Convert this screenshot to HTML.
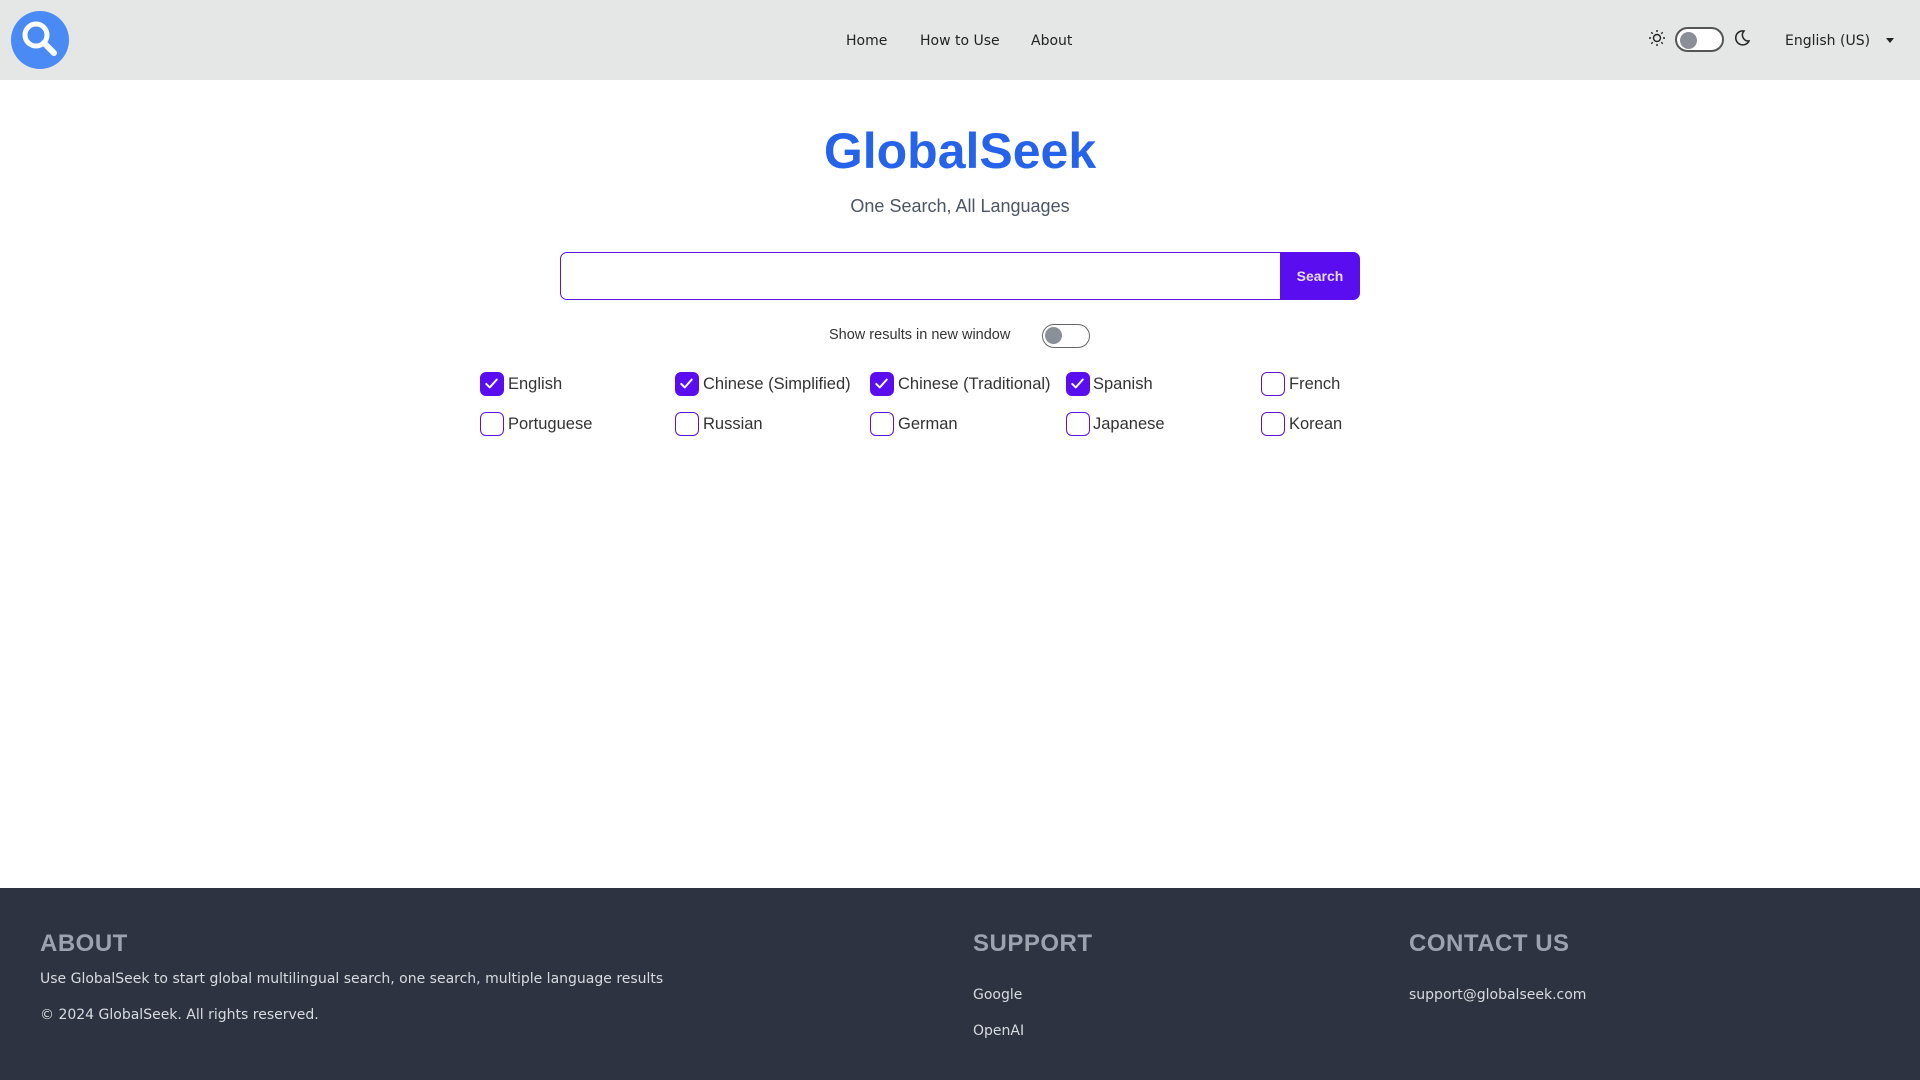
<!DOCTYPE html>
<html><head><meta charset="utf-8"><style>
*{box-sizing:border-box;margin:0;padding:0}
body{width:1920px;height:1080px;overflow:hidden;font-family:"Liberation Sans",sans-serif;background:#fff;position:relative}
.hdr{position:absolute;left:0;top:0;width:1920px;height:80px;background:#e5e7e6}
.abs{position:absolute;white-space:nowrap}
.nav{font-family:"DejaVu Sans",sans-serif;font-size:14px;color:#222;top:33px}
.tg{position:absolute;border:2px solid #555;border-radius:14px;background:#fff}
.tg i{position:absolute;left:3px;top:3px;border-radius:50%;background:#8a8f98}
.cb{position:absolute;width:24px;height:24px;border:1.5px solid #5a14e0;border-radius:6px;background:#fff}
.cb.on{background:#5a0ef0;border-color:#5a0ef0}
.lb{position:absolute;font-size:16.5px;color:#333;white-space:nowrap;top:0}
.ft{position:absolute;left:0;top:888px;width:1920px;height:192px;background:#2d3340}
.fh{position:absolute;font-size:24px;font-weight:bold;color:#9ca3af;letter-spacing:.5px}
.fx{position:absolute;font-family:"DejaVu Sans",sans-serif;font-size:14px;color:#d8dbe0;white-space:nowrap}
</style></head><body>
<div class="hdr">
<svg class="abs" style="left:10px;top:10px" width="60" height="60" viewBox="0 0 60 60"><circle cx="30" cy="30" r="29" fill="#4a8af4"/><circle cx="26" cy="25" r="11" fill="none" stroke="#fff" stroke-width="5"/><line x1="34" y1="33" x2="44" y2="43" stroke="#fff" stroke-width="6" stroke-linecap="round"/></svg>
<div class="abs nav" style="left:846px">Home</div>
<div class="abs nav" style="left:920px">How to Use</div>
<div class="abs nav" style="left:1031px">About</div>
<svg class="abs" style="left:1648px;top:29px" width="18" height="18" viewBox="0 0 18 18" fill="none" stroke="#222" stroke-width="1.4"><circle cx="9" cy="9" r="3.5"/><path d="M9 1v2M9 15v2M1 9h2M15 9h2M3.3 3.3l1.4 1.4M13.3 13.3l1.4 1.4M3.3 14.7l1.4-1.4M13.3 4.7l1.4-1.4"/></svg>
<div class="tg" style="left:1675px;top:27px;width:49px;height:25px"><i style="width:17px;height:17px"></i></div>
<svg class="abs" style="left:1733px;top:29px" width="18" height="18" viewBox="0 0 18 18" fill="none" stroke="#222" stroke-width="1.5"><path d="M11 2a7 7 0 1 0 5 10A6 6 0 0 1 11 2z"/></svg>
<div class="abs nav" style="left:1785px">English (US)</div>
<div class="abs" style="left:1886px;top:38px;border:4px solid transparent;border-top:5px solid #222"></div>
</div>
<div class="abs" style="left:0;width:1920px;text-align:center;top:122px;font-size:50px;font-weight:bold;color:#2563eb">GlobalSeek</div>
<div class="abs" style="left:0;width:1920px;text-align:center;top:196px;font-size:18px;color:#4b5563">One Search, All Languages</div>
<div class="abs" style="left:560px;top:252px;width:730px;height:48px;border:1.5px solid #5a14e0;border-radius:7px 0 0 7px;background:#fff"></div>
<div class="abs" style="left:1280px;top:252px;width:80px;height:48px;background:#5a0ef0;border-radius:0 7px 7px 0;color:#e6dcff;font-size:14px;font-weight:bold;text-align:center;line-height:48px">Search</div>
<div class="abs" style="left:829px;top:327px;font-size:14.5px;color:#333">Show results in new window</div>
<div class="tg" style="left:1042px;top:324px;width:48px;height:24px;border-width:1.5px;border-color:#666"><i style="width:17px;height:17px;top:2px;left:2px"></i></div>
<svg width="0" height="0" style="position:absolute"><defs><symbol id="ck" viewBox="0 0 24 24"><path d="M6 12.5l4 4 8-9" fill="none" stroke="#fff" stroke-width="2.2" stroke-linecap="round" stroke-linejoin="round"/></symbol></defs></svg>
<div style="position:absolute;left:0;top:375px">
<div class="cb on" style="left:480px;top:-3px"><svg width="21" height="21"><use href="#ck"/></svg></div><div class="lb" style="left:508px">English</div>
<div class="cb on" style="left:675px;top:-3px"><svg width="21" height="21"><use href="#ck"/></svg></div><div class="lb" style="left:703px">Chinese (Simplified)</div>
<div class="cb on" style="left:870px;top:-3px"><svg width="21" height="21"><use href="#ck"/></svg></div><div class="lb" style="left:898px">Chinese (Traditional)</div>
<div class="cb on" style="left:1066px;top:-3px"><svg width="21" height="21"><use href="#ck"/></svg></div><div class="lb" style="left:1093px">Spanish</div>
<div class="cb" style="left:1261px;top:-3px"></div><div class="lb" style="left:1289px">French</div>
</div>
<div style="position:absolute;left:0;top:415px">
<div class="cb" style="left:480px;top:-3px"></div><div class="lb" style="left:508px">Portuguese</div>
<div class="cb" style="left:675px;top:-3px"></div><div class="lb" style="left:703px">Russian</div>
<div class="cb" style="left:870px;top:-3px"></div><div class="lb" style="left:898px">German</div>
<div class="cb" style="left:1066px;top:-3px"></div><div class="lb" style="left:1093px">Japanese</div>
<div class="cb" style="left:1261px;top:-3px"></div><div class="lb" style="left:1289px">Korean</div>
</div>
<div class="ft">
<div class="fh" style="left:40px;top:42px">ABOUT</div>
<div class="fx" style="left:40px;top:83px">Use GlobalSeek to start global multilingual search, one search, multiple language results</div>
<div class="fx" style="left:40px;top:119px">© 2024 GlobalSeek. All rights reserved.</div>
<div class="fh" style="left:973px;top:42px">SUPPORT</div>
<div class="fx" style="left:973px;top:99px">Google</div>
<div class="fx" style="left:973px;top:135px">OpenAI</div>
<div class="fh" style="left:1409px;top:42px">CONTACT US</div>
<div class="fx" style="left:1409px;top:99px">support@globalseek.com</div>
</div>
</body></html>
